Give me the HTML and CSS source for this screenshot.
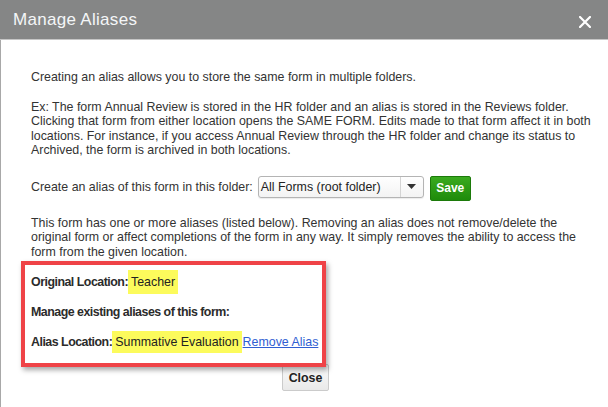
FILE: index.html
```html
<!DOCTYPE html>
<html>
<head>
<meta charset="utf-8">
<link rel="stylesheet" href="styles.css">
</head>
<body>
<div class="dialog">
  <div class="header">
    <span class="title">Manage Aliases</span>
    <svg class="close-x" width="12" height="12" viewBox="0 0 12 12"><path d="M1 1 L11 11 M11 1 L1 11" stroke="#fff" stroke-width="2.2" stroke-linecap="square" fill="none"/></svg>
  </div>
  <div class="content">
    <div class="inner">
      <p class="intro">Creating an alias allows you to store the same form in multiple folders.</p>
      <p class="example">Ex: The form Annual Review is stored in the HR folder and an alias is stored in the Reviews folder.<br>Clicking that form from either location opens the SAME FORM. Edits made to that form affect it in both<br>locations. For instance, if you access Annual Review through the HR folder and change its status to<br>Archived, the form is archived in both locations.</p>
      <div class="folder-row">
        <span class="folder-label">Create an alias of this form in this folder:</span>
        <div class="select">
          <span class="select-text">All Forms (root folder)</span>
          <span class="select-arrow"><svg width="9" height="5" viewBox="0 0 9 5"><path d="M0 0 H9 L4.5 5 Z" fill="#333"/></svg></span>
        </div>
        <span class="btn-save">Save</span>
      </div>
      <p class="notice">This form has one or more aliases (listed below). Removing an alias does not remove/delete the<br>original form or affect completions of the form in any way. It simply removes the ability to access the<br>form from the given location.</p>
      <div class="alias-list">
        <div class="alias-row"><b class="lbl">Original Location:</b><span class="hl">Teacher</span></div>
        <div class="alias-row"><b class="lbl">Manage existing aliases of this form:</b></div>
        <div class="alias-row"><b class="lbl">Alias Location:</b><span class="hl">Summative Evaluation</span><a class="remove" href="#">Remove Alias</a></div>
      </div>
    </div>
    <div class="footer"><span class="btn-close">Close</span></div>
    <div class="annotation"></div>
  </div>
</div>
</body>
</html>
```
FILE: styles.css
```css
html, body {
  margin: 0;
  padding: 0;
  background: #fff;
}
body {
  font-family: "Liberation Sans", Arial, sans-serif;
  color: #333;
  font-size: 12.4px;
}
.dialog {
  width: 608px;
  height: 407px;
  overflow: hidden;
}
.header {
  height: 39px;
  background: #858686;
  border-bottom: 1px solid #c6c6c6;
  display: flex;
  align-items: center;
  justify-content: space-between;
  padding: 0 17px 0 13px;
}
.title {
  color: #f4f6f8;
  font-size: 17px;
  letter-spacing: 0.3px;
}
.close-x {
  margin-top: 5px;
  display: block;
}
.content {
  position: relative;
  border-left: 1px solid #a8a8a8;
  height: 367px;
  box-sizing: border-box;
  padding-top: 30px;
}
.inner {
  padding-left: 30px;
}
p {
  margin: 0 0 15px;
  line-height: 14.5px;
  white-space: nowrap;
}
.example {
  margin-bottom: 18px;
}
.folder-row {
  display: flex;
  align-items: flex-start;
  margin-bottom: 15px;
  height: 25px;
}
.folder-label {
  margin-top: 4px;
  line-height: 14.5px;
}
.select {
  margin-left: 5px;
  width: 166px;
  height: 22px;
  box-sizing: border-box;
  border: 1px solid #b4b4b4;
  border-radius: 3px;
  background: linear-gradient(#ffffff, #f3f3f3);
  box-shadow: 0 1px 1px rgba(0,0,0,0.08);
  display: flex;
  align-items: center;
}
.select-text {
  flex: 1;
  padding-left: 2px;
  color: #222;
}
.select-arrow {
  width: 22px;
  height: 20px;
  border-left: 1px solid #d4d4d4;
  display: flex;
  align-items: center;
  justify-content: center;
}
.select-arrow svg {
  display: block;
}
.btn-save {
  margin-left: 6px;
  width: 41px;
  height: 25px;
  box-sizing: border-box;
  border: 1px solid #1c7a0a;
  border-radius: 2px;
  background: linear-gradient(#3aaa1f, #1e8b0b);
  color: #fff;
  font-weight: bold;
  font-size: 12px;
  display: flex;
  align-items: center;
  justify-content: center;
}
.notice {
  margin-bottom: 11px;
}
.alias-list {
  display: flex;
  flex-direction: column;
  gap: 6px;
}
.alias-row {
  height: 24px;
  line-height: 24px;
  white-space: nowrap;
  display: flex;
  align-items: center;
}
.lbl {
  letter-spacing: -0.5px;
  color: #2b2b2b;
}
.hl {
  background: #fcfb5c;
  padding: 0 3px;
  color: #222;
  height: 24px;
}
.alias-row:last-child .hl {
  height: 22px;
  line-height: 22px;
}
.remove {
  margin-left: 1px;
  color: #2f5ed2;
  text-decoration: underline;
}
.footer {
  display: flex;
  justify-content: center;
  padding-left: 2px;
  margin-top: 10px;
}
.btn-close {
  width: 47px;
  height: 27px;
  box-sizing: border-box;
  border: 1px solid #cbcbcb;
  border-radius: 2px;
  background: linear-gradient(#fbfbfb, #e9e9e9);
  color: #222;
  font-weight: bold;
  display: flex;
  align-items: center;
  justify-content: center;
}
.annotation {
  position: absolute;
  left: 20px;
  top: 221px;
  width: 305px;
  height: 106px;
  box-sizing: border-box;
  border: 4px solid #ef4347;
  box-shadow: 2px 3px 5px rgba(0,0,0,0.35);
  pointer-events: none;
}
```
